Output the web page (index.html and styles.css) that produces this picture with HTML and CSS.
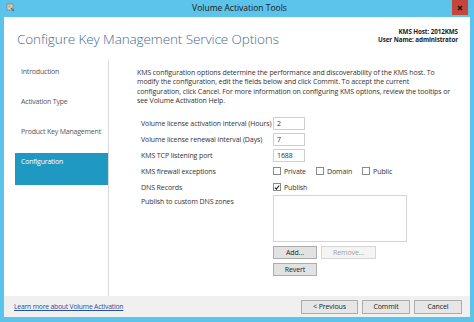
FILE: index.html
```html
<!DOCTYPE html>
<html lang="en">
<head>
<meta charset="UTF-8">
<title>Volume Activation Tools</title>
<link rel="stylesheet" href="styles.css">
</head>
<body>

<div class="window">
  <div class="titlebar">
    <svg class="app-icon" width="9" height="9" viewBox="0 0 9 9">
      <rect x="1" y="1" width="6" height="6" fill="#d8d4cc" stroke="#8a8680" stroke-width="0.8"></rect>
      <rect x="2.5" y="2.5" width="2" height="2" fill="#c9a040"></rect>
      <path d="M5 5 L8 8" stroke="#6a6660" stroke-width="1.2"></path>
    </svg>
    <div class="title">Volume Activation Tools</div>
    <div class="close">
      <svg width="6" height="6" viewBox="0 0 6 6"><path d="M1 1 L5 5 M5 1 L1 5" stroke="#2b0f0d" stroke-width="1.5"></path></svg>
    </div>
  </div>

  <div class="client">
    <div class="header">
      <h1>Configure Key Management Service Options</h1>
      <div class="host-info">
        <div>KMS Host: 2012KMS</div>
        <div>User Name: administrator</div>
      </div>
    </div>

    <div class="main">
      <div class="nav">
        <div class="nav-item">Introduction</div>
        <div class="nav-item">Activation Type</div>
        <div class="nav-item">Product Key Management</div>
        <div class="nav-item selected">Configuration</div>
      </div>

      <div class="content">
        <p class="intro">KMS configuration options determine the performance and discoverability of the KMS host. To<br>
        modify the configuration, edit the fields below and click Commit. To accept the current<br>
        configuration, click Cancel. For more information on configuring KMS options, review the tooltips or
        see Volume Activation Help.</p>

        <div class="form">
          <div class="row">
            <label>Volume license activation interval (Hours)</label>
            <div class="field"><span class="input">2</span></div>
          </div>
          <div class="row">
            <label>Volume license renewal interval (Days)</label>
            <div class="field"><span class="input">7</span></div>
          </div>
          <div class="row">
            <label>KMS TCP listening port</label>
            <div class="field"><span class="input">1688</span></div>
          </div>
          <div class="row">
            <label>KMS firewall exceptions</label>
            <div class="field checks">
              <span class="check"><span class="box"></span>Private</span>
              <span class="check"><span class="box"></span>Domain</span>
              <span class="check"><span class="box"></span>Public</span>
            </div>
          </div>
          <div class="row">
            <label>DNS Records</label>
            <div class="field checks">
              <span class="check"><span class="box checked">
                <svg width="7" height="7" viewBox="0 0 7 7"><path d="M1 3.6 L2.8 5.4 L6 1.2" fill="none" stroke="#222" stroke-width="1.3"></path></svg>
              </span>Publish</span>
            </div>
          </div>
          <div class="row zones">
            <label>Publish to custom DNS zones</label>
            <div class="field">
              <div class="zone-list"></div>
              <div class="btn-row">
                <span class="btn small">Add...</span>
                <span class="btn small disabled">Remove...</span>
              </div>
              <div class="btn-row">
                <span class="btn small">Revert</span>
              </div>
            </div>
          </div>
        </div>
      </div>
    </div>

    <div class="footer">
      <a class="help-link" href="#">Learn more about Volume Activation</a>
      <div class="footer-buttons">
        <span class="btn wide">&lt; Previous</span>
        <span class="btn">Commit</span>
        <span class="btn">Cancel</span>
      </div>
    </div>
  </div>
</div>

</body>
</html>
```

FILE: styles.css
```css
/* window frame */

body {
  margin: 0;
  font-family: "Open Sans", "Noto Sans", sans-serif;
  background: #5cc3ea;
}

.window {
  width: 474px;
  height: 322px;
  box-sizing: border-box;
  padding: 0 4px 5px 4px;
  background: #5cc3ea;
  display: flex;
  flex-direction: column;
}

.titlebar {
  height: 17px;
  display: flex;
  align-items: flex-start;
}

.app-icon {
  margin: 3px 0 0 2px;
}

.title {
  flex: 1;
  text-align: center;
  font-size: 8.5px;
  line-height: 15px;
  color: #1b1b1b;
  padding-left: 12px;
}

.close {
  width: 16px;
  height: 15px;
  margin-right: 2px;
  background: #c4463b;
  display: flex;
  align-items: center;
  justify-content: center;
}

.client {
  flex: 1;
  background: #fff;
  display: flex;
  flex-direction: column;
}

/* header */

.header {
  height: 43px;
  display: flex;
  justify-content: space-between;
  align-items: center;
  padding: 0 12px 0 13px;
}

.header h1 {
  margin: 0;
  font-size: 13.5px;
  font-weight: 300;
  color: #3e6d92;
  letter-spacing: -0.1px;
  padding-top: 1px;
}

.host-info {
  font-size: 6.3px;
  font-weight: bold;
  color: #222;
  text-align: right;
  line-height: 8px;
  margin-top: -6px;
  letter-spacing: -0.1px;
}

/* left navigation */

.main {
  flex: 1;
  display: flex;
}

.nav {
  width: 93px;
  padding-left: 11px;
  border-right: 1px solid #dadada;
  padding-top: 3px;
}

.nav-item {
  height: 30px;
  box-sizing: border-box;
  padding: 4px 6px;
  font-size: 7px;
  letter-spacing: -0.2px;
  white-space: nowrap;
  color: #555;
}

.nav-item.selected {
  height: 32px;
  background: #1f98c2;
  color: #fff;
}

/* page content */

.content {
  flex: 1;
  padding: 8px 0 0 28px;
  font-size: 7px;
  letter-spacing: -0.1px;
  color: #333;
}

.intro {
  margin: 0;
  width: 322px;
  line-height: 9.3px;
}

.form {
  margin-top: 10px;
  padding-left: 4px;
}

.row {
  display: flex;
  align-items: center;
  min-height: 16px;
}

.row label {
  width: 132px;
  white-space: nowrap;
}

.zones {
  align-items: flex-start;
}

.zones label {
  padding-top: 2px;
}

.input {
  display: block;
  width: 27px;
  height: 11px;
  border: 1px solid #cfcfcf;
  padding-left: 3px;
  line-height: 11px;
}

.checks {
  display: flex;
  gap: 10px;
}

.check {
  display: flex;
  align-items: center;
  gap: 3px;
}

.box {
  width: 6px;
  height: 6px;
  border: 1px solid #8a8a8a;
  background: #fff;
  display: flex;
  align-items: center;
  justify-content: center;
}

.zone-list {
  width: 132px;
  height: 45px;
  border: 1px solid #d4d4d4;
}

.btn-row {
  display: flex;
  gap: 4px;
  margin-top: 4px;
}

/* buttons */

.btn {
  display: inline-block;
  box-sizing: border-box;
  height: 13px;
  width: 48px;
  border: 1px solid #acacac;
  background: #e2e2e2;
  font-size: 7px;
  letter-spacing: -0.1px;
  line-height: 11px;
  text-align: center;
  color: #222;
}

.btn.small {
  width: 44px;
}

.btn.disabled {
  width: 55px;
  background: #f4f4f4;
  border-color: #d6d6d6;
  color: #a0a0a0;
}

.btn.wide {
  width: 57px;
}

/* footer */

.footer {
  height: 21px;
  background: #f0f0f0;
  display: flex;
  align-items: center;
  justify-content: space-between;
  padding: 0 8px 0 10px;
}

.help-link {
  font-size: 6.8px;
  letter-spacing: -0.2px;
  color: #2a4f9c;
}

.footer-buttons {
  display: flex;
  gap: 4px;
}

.footer-buttons .btn {
  height: 14px;
  line-height: 12px;
  background: #e6e6e6;
}
```
